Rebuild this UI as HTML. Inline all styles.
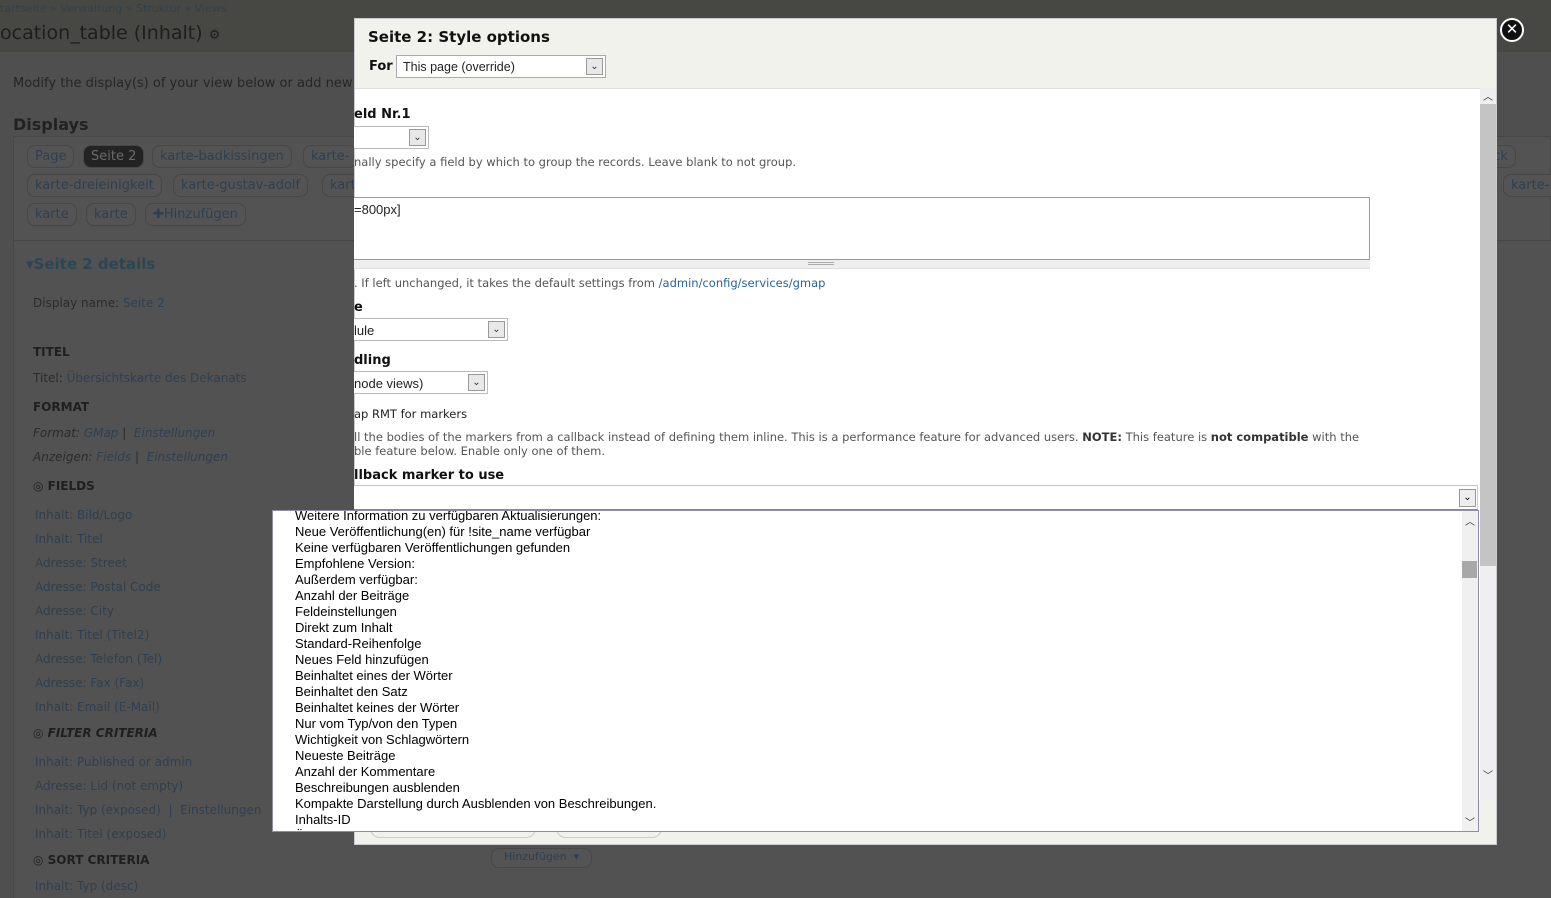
<!DOCTYPE html>
<html><head><meta charset="utf-8"><style>
*{margin:0;padding:0;box-sizing:border-box}
body{width:1551px;height:898px;overflow:hidden;background:#4f4f4f;font-family:"Liberation Sans","DejaVu Sans",sans-serif;position:relative}
.a{position:absolute;white-space:nowrap}
.dv{font-family:"DejaVu Sans",sans-serif}
.lk{color:#2f3f50}
.pill{position:absolute;height:23px;border:1px solid #474747;border-radius:8px;background:#545454;color:#2f3f50;font:13px "DejaVu Sans",sans-serif;padding:3px 7px;white-space:nowrap}
.sel{position:absolute;background:#fff;border:1px solid #bbb;height:23px}
.sel .ar{position:absolute;right:2px;top:2px;width:17px;height:17px;border:1px solid #999;background:#e8e8e8;font-size:10px;text-align:center;line-height:16px;color:#333}
.opt{font:13px "Liberation Sans",sans-serif;color:#000;height:16px;line-height:16px}
</style></head><body>
<div class="a" style="left:0;top:0;width:1551px;height:52px;background:#474743"></div>
<div class="a dv" style="left:0;top:2px;font-size:11px;color:#34414c">tartseite » Verwaltung » Struktur » Views</div>
<div class="a dv" style="left:0;top:22px;font-size:19px;color:#1e1e1e">ocation_table (Inhalt) <span style="font-size:13px">⚙</span></div>
<div class="a dv" style="left:13px;top:76px;font-size:13px;color:#262626">Modify the display(s) of your view below or add new di</div>
<div class="a dv" style="left:13px;top:115px;font-size:16px;font-weight:bold;color:#222">Displays</div>
<div class="a" style="left:13px;top:136px;width:1538px;height:105px;border:1px solid #474747;background:#535353"></div>
<div class="pill" style="left:27px;top:145px">Page</div>
<div class="pill" style="left:83px;top:145px;background:#232323;color:#6a6a6a">Seite 2</div>
<div class="pill" style="left:152px;top:145px">karte-badkissingen</div>
<div class="pill" style="left:303px;top:145px">karte-</div>
<div class="pill" style="left:1470px;top:145px;border-left:0">neck</div>
<div class="pill" style="left:27px;top:174px">karte-dreieinigkeit</div>
<div class="pill" style="left:173px;top:174px">karte-gustav-adolf</div>
<div class="pill" style="left:322px;top:174px">kart</div>
<div class="pill" style="left:1503px;top:174px">karte-</div>
<div class="pill" style="left:27px;top:203px">karte</div>
<div class="pill" style="left:86px;top:203px">karte</div>
<div class="pill" style="left:145px;top:203px">✚Hinzufügen</div>
<div class="a" style="left:13px;top:241px;width:1538px;height:657px;background:#525252;border-left:1px solid #474747"></div>
<div class="a dv" style="left:26px;top:255px;font-size:15px;font-weight:bold;color:#2a4656">▾Seite 2 details</div>
<div class="a dv" style="left:33px;top:296px;font-size:12px;color:#2b2b2b">Display name: <span class="lk">Seite 2</span></div>
<div class="a dv" style="left:33px;top:345px;font-size:12px;font-weight:bold;color:#1f1f1f">TITEL</div>
<div class="a dv" style="left:33px;top:371px;font-size:12px;color:#2b2b2b">Titel: <span class="lk">Übersichtskarte des Dekanats</span></div>
<div class="a dv" style="left:33px;top:400px;font-size:12px;font-weight:bold;color:#1f1f1f">FORMAT</div>
<div class="a dv" style="left:33px;top:426px;font-size:12px;font-style:italic;color:#2b2b2b">Format: <span class="lk">GMap</span> | &nbsp;<span class="lk">Einstellungen</span></div>
<div class="a dv" style="left:33px;top:450px;font-size:12px;font-style:italic;color:#2b2b2b">Anzeigen: <span class="lk">Fields</span> | &nbsp;<span class="lk">Einstellungen</span></div>
<div class="a dv" style="left:33px;top:479px;font-size:12px;font-weight:bold;color:#1f1f1f">◎ FIELDS</div>
<div class="a dv lk" style="left:35px;top:503px;font-size:12px;line-height:24px">Inhalt: Bild/Logo<br>Inhalt: Titel<br>Adresse: Street<br>Adresse: Postal Code<br>Adresse: City<br>Inhalt: Titel (Titel2)<br>Adresse: Telefon (Tel)<br>Adresse: Fax (Fax)<br>Inhalt: Email (E-Mail)</div>
<div class="a dv" style="left:33px;top:726px;font-size:12px;font-weight:bold;font-style:italic;color:#1f1f1f">◎ FILTER CRITERIA</div>
<div class="a dv lk" style="left:35px;top:750px;font-size:12px;line-height:24px">Inhalt: Published or admin<br>Adresse: Lid (not empty)<br>Inhalt: Typ (exposed) &nbsp;| &nbsp;Einstellungen<br>Inhalt: Titel (exposed)</div>
<div class="a dv" style="left:33px;top:853px;font-size:12px;font-weight:bold;color:#1f1f1f">◎ SORT CRITERIA</div>
<div class="a dv lk" style="left:35px;top:879px;font-size:12px">Inhalt: Typ (desc)</div>
<div class="pill" style="left:491px;top:848px;height:20px;padding:1px 12px;font-size:11px">Hinzufügen &nbsp;▾</div>

<div class="a" style="left:354px;top:18px;width:1143px;height:827px;background:#f2f2ec;border:1px solid #ccc"></div>
<div class="a dv" style="left:368px;top:28px;font-size:15px;font-weight:bold;color:#111">Seite 2: Style options</div>
<div class="a dv" style="left:369px;top:59px;font-size:13px;font-weight:bold;color:#111">For</div>
<div class="sel" style="left:396px;top:55px;width:210px;border-color:#aaa"><span class="a" style="left:6px;top:4px;font-size:12.5px;color:#222">This page (override)</span><span class="ar">⌄</span></div>
<div class="a" style="left:355px;top:88px;width:1125px;height:712px;background:#fff;border-top:1px solid #ddd"></div>
<div class="a" style="left:1480px;top:88px;width:16px;height:712px;background:#cbcbcb"></div>
<div class="a" style="left:1480px;top:88px;width:16px;height:16px;background:#eee;font-size:10px;text-align:center;color:#333">︿</div>
<div class="a" style="left:1480px;top:104px;width:16px;height:462px;background:#c4c4c4"></div>
<div class="a" style="left:1480px;top:566px;width:16px;height:234px;background:#efeff2"></div>
<div class="a" style="left:1500px;top:18px;width:24px;height:24px;border-radius:12px;background:#111;border:2px solid #fff;color:#fff;font-size:15px;font-weight:bold;text-align:center;line-height:19px">✕</div>

<div class="a dv" style="left:354px;top:107px;font-size:13px;font-weight:bold;color:#111">eld Nr.1</div>
<div class="sel" style="left:354px;top:126px;width:75px;border-left:0"><span class="ar">⌄</span></div>
<div class="a dv" style="left:354px;top:155px;font-size:11.5px;color:#555">nally specify a field by which to group the records. Leave blank to not group.</div>
<div class="a" style="left:354px;top:197px;width:1016px;height:63px;border:1px solid #999;border-left:0;background:#fff"></div>
<div class="a" style="left:354px;top:260px;width:1016px;height:9px;background:#eee;border-bottom:1px solid #ddd"></div>
<div class="a" style="left:808px;top:262px;width:26px;height:3px;border-top:1px solid #aaa;border-bottom:1px solid #aaa"></div>
<div class="a" style="left:354px;top:202px;font-size:13px;color:#222">=800px]</div>
<div class="a dv" style="left:354px;top:276px;font-size:11.5px;color:#555">. If left unchanged, it takes the default settings from <span style="color:#2a6496">/admin/config/services/gmap</span></div>
<div class="a dv" style="left:354px;top:300px;font-size:13px;font-weight:bold;color:#111">e</div>
<div class="sel" style="left:354px;top:318px;width:154px;border-left:0"><span class="a" style="left:0;top:4px;font-size:13px;color:#222">lule</span><span class="ar">⌄</span></div>
<div class="a dv" style="left:354px;top:353px;font-size:13px;font-weight:bold;color:#111">dling</div>
<div class="sel" style="left:354px;top:371px;width:134px;border-left:0"><span class="a" style="left:0;top:4px;font-size:13px;color:#222">node views)</span><span class="ar">⌄</span></div>
<div class="a dv" style="left:354px;top:407px;font-size:11.5px;color:#222">ap RMT for markers</div>
<div class="a dv" style="left:354px;top:430px;font-size:11.5px;color:#555;line-height:14px">ll the bodies of the markers from a callback instead of defining them inline. This is a performance feature for advanced users. <b style="color:#333">NOTE:</b> This feature is <b style="color:#333">not compatible</b> with the<br>ble feature below. Enable only one of them.</div>
<div class="a dv" style="left:354px;top:468px;font-size:13px;font-weight:bold;color:#111">llback marker to use</div>
<div class="a" style="left:354px;top:485px;width:1124px;height:25px;border-top:1px solid #d9c48a;border-right:1px solid #ccc;border-bottom:1px solid #888;background:#fff"></div>
<div class="a" style="left:1459px;top:489px;width:17px;height:18px;border:1px solid #999;background:#eee;font-size:10px;text-align:center;line-height:16px">⌄</div>
<div class="a" style="left:370px;top:818px;width:166px;height:20px;border:1px solid #ccc;border-radius:10px;background:#f2f2ec"></div>
<div class="a" style="left:556px;top:818px;width:106px;height:20px;border:1px solid #ccc;border-radius:10px;background:#f2f2ec"></div>

<div class="a" style="left:272px;top:510px;width:1207px;height:322px;background:#fff;border:1px solid #8e8ea6;overflow:hidden">
<div style="position:absolute;left:22px;top:-3px">
<div class="opt">Weitere Information zu verfügbaren Aktualisierungen:</div>
<div class="opt">Neue Veröffentlichung(en) für !site_name verfügbar</div>
<div class="opt">Keine verfügbaren Veröffentlichungen gefunden</div>
<div class="opt">Empfohlene Version:</div>
<div class="opt">Außerdem verfügbar:</div>
<div class="opt">Anzahl der Beiträge</div>
<div class="opt">Feldeinstellungen</div>
<div class="opt">Direkt zum Inhalt</div>
<div class="opt">Standard-Reihenfolge</div>
<div class="opt">Neues Feld hinzufügen</div>
<div class="opt">Beinhaltet eines der Wörter</div>
<div class="opt">Beinhaltet den Satz</div>
<div class="opt">Beinhaltet keines der Wörter</div>
<div class="opt">Nur vom Typ/von den Typen</div>
<div class="opt">Wichtigkeit von Schlagwörtern</div>
<div class="opt">Neueste Beiträge</div>
<div class="opt">Anzahl der Kommentare</div>
<div class="opt">Beschreibungen ausblenden</div>
<div class="opt">Kompakte Darstellung durch Ausblenden von Beschreibungen.</div>
<div class="opt">Inhalts-ID</div>
<div class="opt">Ü</div>
</div>
<div style="position:absolute;left:1189px;top:0;width:16px;height:320px;background:#f0f0f0"></div>
<div style="position:absolute;left:1189px;top:2px;width:16px;font-size:10px;text-align:center;color:#333">︿</div>
<div style="position:absolute;left:1189px;top:50px;width:15px;height:17px;background:#a8a8a8"></div>
<div style="position:absolute;left:1189px;top:303px;width:16px;font-size:10px;text-align:center;color:#333">﹀</div>
</div>
<div class="a" style="left:1480px;top:767px;width:16px;font-size:10px;text-align:center;color:#333">﹀</div>
</body></html>
